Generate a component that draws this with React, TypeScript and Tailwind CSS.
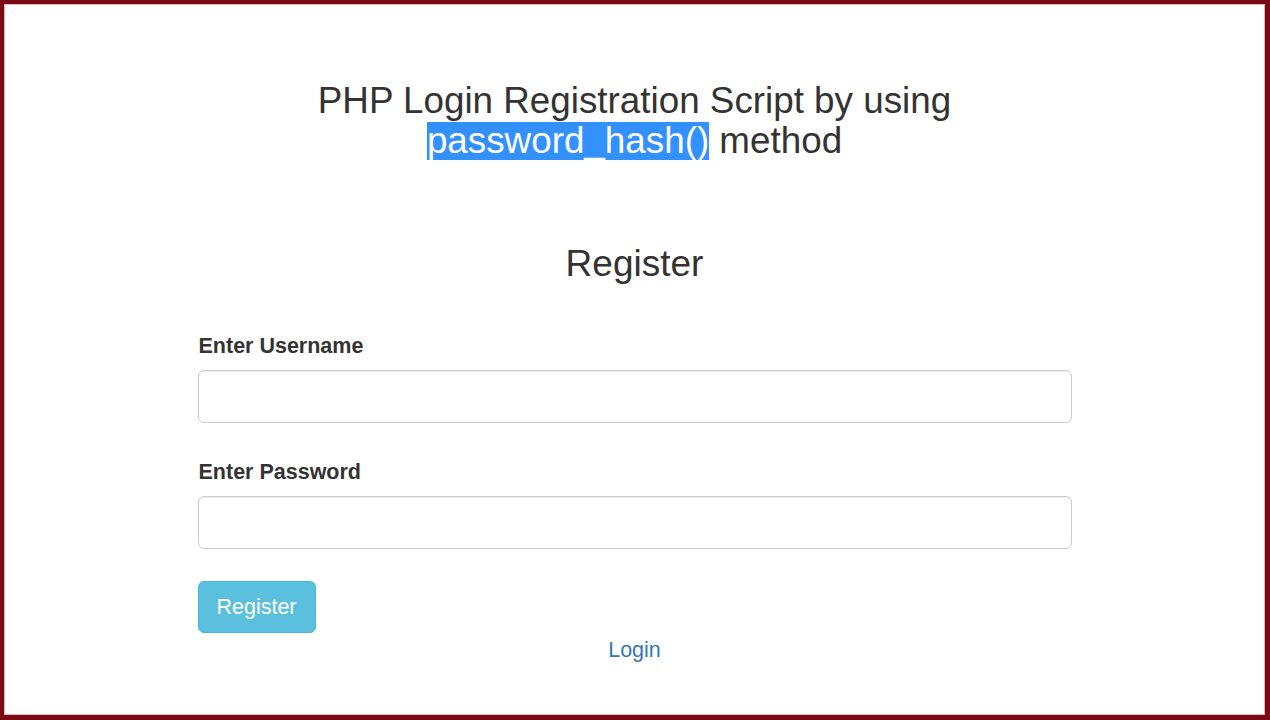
import { useState } from 'react';

const FONT = { fontFamily: '"Liberation Sans", Arial, sans-serif' };

export default function App() {
  const [username, setUsername] = useState('');
  const [password, setPassword] = useState('');

  return (
    <div
      style={FONT}
      className="h-[720px] w-[1270px] border-t-4 border-l-4 border-r-[5px] border-b-[5px] border-[#7b0a17] bg-white text-[#333] shadow-[inset_0_0_0_1px_#e6b3b9]"
    >
      <div className="mx-auto w-[874px] pt-[77px]">
        <h3 className="text-center text-[36.8px] leading-[40px] font-normal">
          PHP Login Registration Script by using
          <br />
          <span className="inline-block bg-[#3390ff] leading-[38px] text-white">password_hash()</span> method
        </h3>

        <h3 className="mt-[83px] text-center text-[37px] leading-[40px] font-normal">Register</h3>

        <form className="mt-[47px]" onSubmit={(e) => e.preventDefault()}>
          <label className="block pl-[1px] text-[21.5px] leading-[30px] font-bold">Enter Username</label>
          <input
            type="text"
            value={username}
            onChange={(e) => setUsername(e.target.value)}
            className="mt-[9px] block h-[53px] w-full rounded-[6px] border border-[#ccc] px-4 text-[21px] shadow-[inset_0_1px_1px_rgba(0,0,0,0.075)] outline-none"
          />

          <label className="mt-[34px] block pl-[1px] text-[21.5px] leading-[30px] font-bold">Enter Password</label>
          <input
            type="password"
            value={password}
            onChange={(e) => setPassword(e.target.value)}
            className="mt-[9px] block h-[53px] w-full rounded-[6px] border border-[#ccc] px-4 text-[21px] shadow-[inset_0_1px_1px_rgba(0,0,0,0.075)] outline-none"
          />

          <button
            type="submit"
            className="mt-[32px] block h-[52px] w-[118px] rounded-[6px] border border-[#46b8da] bg-[#5bc0de] text-[21.5px] text-white"
          >
            Register
          </button>

          <div className="mt-[2px] text-center text-[21.5px] leading-[30px]">
            <a href="#" className="text-[#337ab7]">
              Login
            </a>
          </div>
        </form>
      </div>
    </div>
  );
}
